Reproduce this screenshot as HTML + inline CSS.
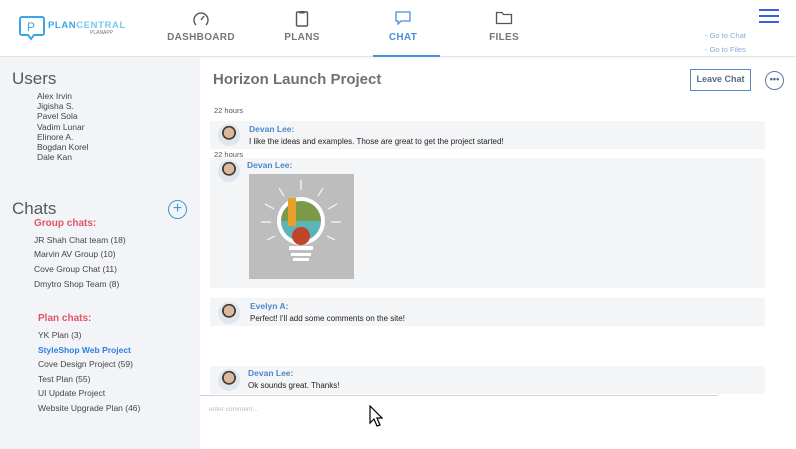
<!DOCTYPE html><html><head><style>
*{margin:0;padding:0;box-sizing:border-box}
body{width:796px;height:449px;overflow:hidden;font-family:"Liberation Sans",sans-serif;background:#fff;position:relative}
.a{position:absolute}
.hdr{left:0;top:0;width:796px;height:57px;background:#fff;border-bottom:1px solid #e2e4e7;box-shadow:0 1px 3px rgba(0,0,0,.06)}
.nav{font-size:10px;color:#555;letter-spacing:.3px;text-align:center;width:80px;font-weight:bold;opacity:.8}
.side{left:0;top:58px;width:200px;height:391px;background:#f2f4f7}
.t{color:#55585e;font-size:17px}
.u{font-size:8.5px;color:#444;line-height:10.2px}
.it{font-size:8.5px;color:#444;left:34px}
.msg{background:#f4f5f7;left:210px;width:555px}
.av{width:22px;height:22px;border-radius:50%;background:radial-gradient(circle at 50% 40%,#d9b9a0 0 30%,#4a3a30 31% 40%,#dfe6ee 41%)}
.nm{font-size:8.5px;color:#4a88c8;font-weight:bold}
.tx{font-size:8px;color:#222}
.hr{font-size:7.5px;color:#555}
</style></head><body>
<div class="a hdr"></div>
<svg class="a" style="left:19px;top:15px" width="26" height="26" viewBox="0 0 26 26"><path d="M3 2h20a2 2 0 0 1 2 2v14a2 2 0 0 1-2 2h-8l-3 4-3-4H3a2 2 0 0 1-2-2V4a2 2 0 0 1 2-2z" fill="none" stroke="#3aa5e8" stroke-width="2"/><text x="8" y="16" font-size="12" fill="#3aa5e8" font-family="Liberation Sans">P</text></svg>
<div class="a" style="left:48px;top:20px;font-size:9.5px;font-weight:bold;color:#3aa5e8;letter-spacing:.6px">PLAN<span style="color:#7cc6ee">CENTRAL</span></div>
<div class="a" style="left:90px;top:30px;font-size:5px;color:#777">PLANAPP</div>
<svg class="a" style="left:192px;top:10px" width="18" height="18" viewBox="0 0 18 18"><path d="M4 15A7 7 0 1 1 14 15" fill="none" stroke="#555" stroke-width="1.4"/><path d="M9 10l3-4" stroke="#555" stroke-width="1.4"/></svg>
<div class="a nav" style="left:161px;top:32px">DASHBOARD</div>
<svg class="a" style="left:294px;top:10px" width="16" height="17" viewBox="0 0 16 17"><rect x="2.5" y="2" width="11" height="14" rx="1" fill="none" stroke="#555" stroke-width="1.4"/><rect x="5.5" y="1" width="5" height="2.5" fill="#555"/></svg>
<div class="a nav" style="left:262px;top:32px">PLANS</div>
<svg class="a" style="left:394px;top:10px" width="18" height="15" viewBox="0 0 18 15"><path d="M2 2h14v9H7l-3 3v-3H2z" fill="none" stroke="#4a90d9" stroke-width="1.3"/></svg>
<div class="a nav" style="left:363px;top:32px;color:#4a90d9;opacity:1">CHAT</div>
<div class="a" style="left:373px;top:55px;width:67px;height:2px;background:#4a90d9"></div>
<svg class="a" style="left:495px;top:10px" width="18" height="15" viewBox="0 0 18 15"><path d="M1.5 2.5h5.5l1.5 2h8v9h-15z" fill="none" stroke="#555" stroke-width="1.3"/></svg>
<div class="a nav" style="left:464px;top:32px">FILES</div>
<div class="a" style="left:705px;top:29px;font-size:7.5px;color:#8aaad6;line-height:14px">- Go to Chat<br>- Go to Files</div>
<div class="a" style="left:759px;top:9px;width:20px;height:2px;background:#3a5fe0;box-shadow:0 6px 0 #3a5fe0,0 12px 0 #3a5fe0"></div>
<div class="a side"></div>
<div class="a t" style="left:12px;top:69px">Users</div>
<div class="a u" style="left:37px;top:91px">Alex Irvin<br>Jigisha S.<br>Pavel Sola<br>Vadim Lunar<br>Elinore A.<br>Bogdan Korel<br>Dale Kan</div>
<div class="a t" style="left:12px;top:199px">Chats</div>
<div class="a" style="left:168px;top:200px;width:19px;height:19px;border:1.3px solid #3a9bd5;border-radius:50%;color:#3a9bd5;font-size:16px;line-height:15px;text-align:center">+</div>
<div class="a" style="left:34px;top:218px;font-size:10px;font-weight:bold;color:#e05468">Group chats:</div>
<div class="a it" style="top:235px">JR Shah Chat team (18)</div>
<div class="a it" style="top:249px">Marvin AV Group (10)</div>
<div class="a it" style="top:264px">Cove Group Chat (11)</div>
<div class="a it" style="top:279px">Dmytro Shop Team (8)</div>
<div class="a" style="left:38px;top:313px;font-size:10px;font-weight:bold;color:#e05468">Plan chats:</div>
<div class="a it" style="left:38px;top:330px">YK Plan (3)</div>
<div class="a it" style="left:38px;top:345px;color:#2d7fe0;font-weight:bold">StyleShop Web Project</div>
<div class="a it" style="left:38px;top:359px">Cove Design Project (59)</div>
<div class="a it" style="left:38px;top:374px">Test Plan (55)</div>
<div class="a it" style="left:38px;top:388px">UI Update Project</div>
<div class="a it" style="left:38px;top:403px">Website Upgrade Plan (46)</div>
<div class="a" style="left:213px;top:71px;font-size:15px;color:#55585e;font-weight:bold;opacity:.85">Horizon Launch Project</div>
<div class="a" style="left:690px;top:69px;width:61px;height:22px;border:1.3px solid #5a8ac0;font-size:9px;color:#5a6a80;text-align:center;line-height:19px;font-weight:bold">Leave Chat</div>
<div class="a" style="left:765px;top:71px;width:19px;height:19px;border:1.3px solid #5a7aa8;border-radius:50%;font-size:9px;color:#4a6a98;text-align:center;line-height:15px;font-weight:bold">•••</div>
<div class="a hr" style="left:214px;top:106px">22 hours</div>
<div class="a msg" style="top:121px;height:28px"></div>
<div class="a av" style="left:218px;top:124px"></div>
<div class="a nm" style="left:249px;top:124px">Devan Lee:</div>
<div class="a tx" style="left:249px;top:137px">I like the ideas and examples. Those are great to get the project started!</div>
<div class="a hr" style="left:214px;top:150px">22 hours</div>
<div class="a msg" style="top:158px;height:130px"></div>
<div class="a av" style="left:218px;top:160px"></div>
<div class="a nm" style="left:247px;top:160px">Devan Lee:</div>
<svg class="a" style="left:249px;top:174px" width="105" height="105" viewBox="0 0 105 105"><rect width="105" height="105" fill="#bdbdbd"/><g stroke="#eee" stroke-width="1.5"><path d="M52 6v10M30 14l5 8M74 14l-5 8M16 30l9 5M88 30l-9 5M12 48h10M82 48h10M18 66l8-4M86 66l-8-4"/></g><circle cx="52" cy="47" r="24" fill="#fff"/><circle cx="52" cy="47" r="20" fill="#5bb5b8"/><path d="M32 47a20 20 0 0 1 40 0z" fill="#7a9a4a"/><circle cx="52" cy="62" r="9" fill="#c0442a"/><rect x="39" y="24" width="8" height="28" fill="#e6a22a"/><rect x="40" y="72" width="24" height="4" fill="#fff"/><rect x="42" y="79" width="20" height="3" fill="#fff"/><rect x="44" y="84" width="16" height="3" fill="#fff"/></svg>
<div class="a msg" style="top:298px;height:28px"></div>
<div class="a av" style="left:218px;top:302px"></div>
<div class="a nm" style="left:250px;top:301px">Evelyn A:</div>
<div class="a tx" style="left:250px;top:314px">Perfect! I'll add some comments on the site!</div>
<div class="a msg" style="top:366px;height:28px"></div>
<div class="a av" style="left:218px;top:369px"></div>
<div class="a nm" style="left:248px;top:368px">Devan Lee:</div>
<div class="a tx" style="left:248px;top:381px">Ok sounds great. Thanks!</div>
<div class="a" style="left:200px;top:395px;width:518px;height:1px;background:#cfd2d6"></div>
<div class="a" style="left:209px;top:406px;font-size:6.5px;color:#bbb">enter comment...</div>
<svg class="a" style="left:369px;top:405px" width="14" height="22" viewBox="0 0 14 22"><path d="M1 1v17l4-4 3 7 3-1-3-7h5z" fill="#fff" stroke="#000" stroke-width="1.2"/></svg>
</body></html>
